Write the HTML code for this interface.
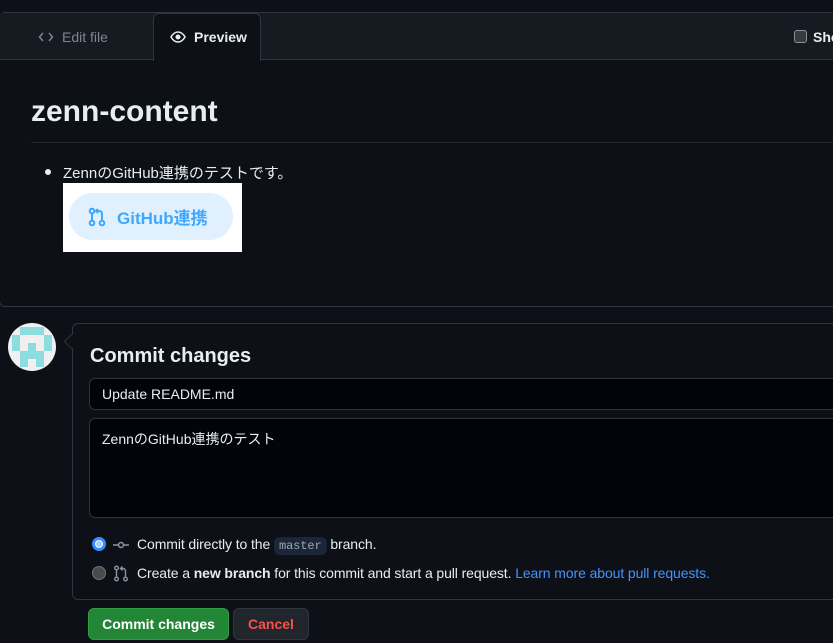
<!DOCTYPE html>
<html><head><meta charset="utf-8"><style>
*{box-sizing:border-box;margin:0;padding:0}
body{width:833px;height:643px;overflow:hidden;background:#0d1117;color:#e6edf3;font-family:"Liberation Sans","Noto Sans CJK JP",sans-serif;font-size:14px;position:relative}
.abs{position:absolute}
.box{left:-1px;top:12px;width:840px;height:295px;border:1px solid #30363d;border-radius:6px}
.hdr{left:0;top:13px;width:833px;height:47px;background:#161b22;border-bottom:1px solid #30363d}
.tab{left:153px;top:13px;width:108px;height:48px;background:#0d1117;border:1px solid #30363d;border-bottom:none;border-radius:6px 6px 0 0}
.muted{color:#7d8590}
</style></head><body>
<div class="abs box"></div>
<div class="abs hdr"></div>
<div class="abs tab"></div>
<div class="abs muted" style="left:38px;top:29px;font-size:14px;display:flex;align-items:center;gap:8px">
<svg width="16" height="16" viewBox="0 0 16 16" fill="none" stroke="#7d8590" stroke-width="1.5"><path d="M5 4L1.5 8 5 12M11 4l3.5 4L11 12"/></svg>Edit file</div>
<div class="abs" style="left:170px;top:29px;font-weight:bold;display:flex;align-items:center;gap:8px">
<svg width="16" height="16" viewBox="0 0 16 16" fill="none" stroke="#e6edf3" stroke-width="1.5"><path d="M1 8c2-3.5 4.5-5 7-5s5 1.5 7 5c-2 3.5-4.5 5-7 5S3 11.5 1 8z"/><circle cx="8" cy="8" r="1.8" fill="#e6edf3"/></svg>Preview</div>
<div class="abs" style="left:794px;top:30px;width:13px;height:13px;border:1px solid #8b949e;border-radius:3px;background:#3a3a3a"></div>
<div class="abs" style="left:813px;top:29px;font-weight:bold">Show</div>
<div class="abs" style="left:31px;top:95px;font-size:30px;font-weight:bold;color:#e6edf3">zenn-content</div>
<div class="abs" style="left:31px;top:142px;width:810px;height:1px;background:#21262d"></div>
<div class="abs" style="left:45px;top:169px;width:6px;height:6px;border-radius:50%;background:#e6edf3"></div>
<div class="abs" style="left:63px;top:162px;font-size:15px">ZennのGitHub連携のテストです。</div>
<div class="abs" style="left:63px;top:183px;width:179px;height:69px;background:#fff"></div>
<div class="abs" style="left:69px;top:193px;width:164px;height:47px;background:#e1f0ff;border-radius:24px;display:flex;align-items:center;padding-left:19px;gap:11px;color:#3ea8ff;font-weight:bold;font-size:17px">
<svg width="18" height="20" viewBox="0 0 18 20" fill="none" stroke="#3ea8ff" stroke-width="2"><circle cx="4" cy="4" r="2.3"/><circle cx="4" cy="16" r="2.3"/><circle cx="14" cy="16" r="2.3"/><path d="M4 6.5v7M14 13.5V7c0-2-1-3-3-3H8M10 2 8 4l2 2"/></svg>GitHub連携</div>

<svg class="abs" style="left:8px;top:323px" width="48" height="48" viewBox="0 0 48 48">
<defs><clipPath id="c"><circle cx="24" cy="24" r="24"/></clipPath></defs>
<g clip-path="url(#c)"><rect width="48" height="48" fill="#f0f0f0"/>
<g fill="#8ddce0">
<rect x="12" y="4" width="24" height="8"/>
<rect x="4" y="12" width="8" height="16"/><rect x="36" y="12" width="8" height="16"/>
<rect x="20" y="20" width="8" height="8"/>
<rect x="12" y="28" width="24" height="8"/>
<rect x="12" y="36" width="8" height="8"/><rect x="28" y="36" width="8" height="8"/>
</g></g></svg>

<div class="abs" style="left:72px;top:323px;width:770px;height:277px;border:1px solid #30363d;border-radius:6px"></div>
<div class="abs" style="left:66px;top:336px;width:11px;height:11px;background:#0d1117;border-left:1px solid #30363d;border-bottom:1px solid #30363d;transform:rotate(45deg)"></div>
<div class="abs" style="left:90px;top:345px;font-size:20px;font-weight:bold;color:#e6edf3">Commit changes</div>
<div class="abs" style="left:89px;top:378px;width:760px;height:32px;background:#010409;border:1px solid #30363d;border-radius:6px;padding:7px 12px;font-size:14px">Update README.md</div>
<div class="abs" style="left:89px;top:418px;width:760px;height:100px;background:#010409;border:1px solid #30363d;border-radius:6px;padding:10px 12px;font-size:14px">ZennのGitHub連携のテスト</div>

<div class="abs" style="left:92px;top:537px;width:14px;height:14px;border-radius:50%;background:#9fcfff;border:3px solid #388bfd;box-shadow:inset 0 0 0 1px #fff"></div>
<svg class="abs" style="left:113px;top:537px" width="16" height="16" viewBox="0 0 16 16" fill="none" stroke="#8b949e" stroke-width="1.5"><circle cx="8" cy="8" r="2.5"/><path d="M0 8h5.5M10.5 8H16"/></svg>
<div class="abs" style="left:137px;top:536px;letter-spacing:-0.1px">Commit directly to the <span style="font-family:'Liberation Mono',monospace;font-size:12px;color:#9da7b3;background:#1b2738;border-radius:6px;padding:2px 5px">master</span> branch.</div>
<div class="abs" style="left:92px;top:566px;width:14px;height:14px;border-radius:50%;background:#4a4a4a;border:1px solid #6e7681"></div>
<svg class="abs" style="left:113px;top:565px" width="16" height="17" viewBox="0 0 16 17" fill="none" stroke="#8b949e" stroke-width="1.4"><circle cx="3.5" cy="3" r="1.8"/><circle cx="3.5" cy="14" r="1.8"/><circle cx="12.5" cy="14" r="1.8"/><path d="M3.5 5v7M12.5 12V6c0-1.5-1-2.5-2.5-2.5H8M9.5 1.5 7.5 3.5l2 2"/></svg>
<div class="abs" style="left:137px;top:565px;letter-spacing:-0.1px">Create a <b>new branch</b> for this commit and start a pull request. <span style="color:#4493f8">Learn more about pull requests.</span></div>

<div class="abs" style="left:88px;top:608px;width:141px;height:32px;background:#238636;border:1px solid #2ea043;border-radius:6px;color:#fff;font-weight:bold;text-align:center;line-height:30px">Commit changes</div>
<div class="abs" style="left:233px;top:608px;width:76px;height:32px;background:#21262d;border:1px solid #30363d;border-radius:6px;color:#f85149;font-weight:bold;text-align:center;line-height:30px">Cancel</div>
</body></html>
